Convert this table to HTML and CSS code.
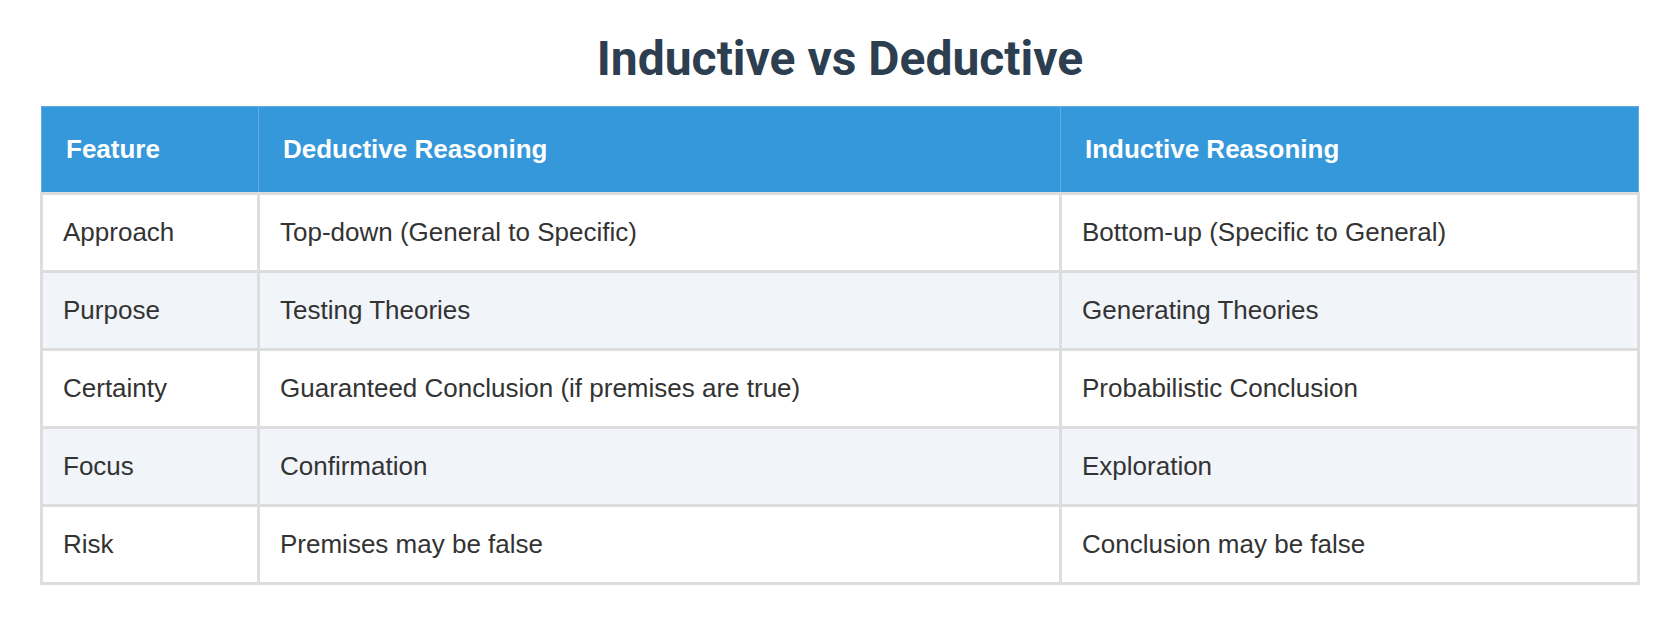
FILE: index.html
```html
<!DOCTYPE html>
<html lang="en">
<head>
<meta charset="utf-8">
<title>Inductive vs Deductive</title>
<link rel="stylesheet" href="styles.css">
</head>
<body>
<div class="page">
  <h1 class="title">Inductive vs Deductive</h1>
  <table class="compare">
    <colgroup>
      <col class="c1">
      <col class="c2">
      <col class="c3">
    </colgroup>
    <thead>
      <tr>
        <th>Feature</th>
        <th>Deductive Reasoning</th>
        <th>Inductive Reasoning</th>
      </tr>
    </thead>
    <tbody>
      <tr>
        <td>Approach</td>
        <td>Top-down (General to Specific)</td>
        <td>Bottom-up (Specific to General)</td>
      </tr>
      <tr>
        <td>Purpose</td>
        <td>Testing Theories</td>
        <td>Generating Theories</td>
      </tr>
      <tr>
        <td>Certainty</td>
        <td>Guaranteed Conclusion (if premises are true)</td>
        <td>Probabilistic Conclusion</td>
      </tr>
      <tr>
        <td>Focus</td>
        <td>Confirmation</td>
        <td>Exploration</td>
      </tr>
      <tr>
        <td>Risk</td>
        <td>Premises may be false</td>
        <td>Conclusion may be false</td>
      </tr>
    </tbody>
  </table>
</div>
</body>
</html>
```

FILE: styles.css
```css
html, body {
  margin: 0;
  padding: 0;
  background: #ffffff;
}

.page {
  padding: 31px 40px 0 40px;
  font-family: "Liberation Sans", Arial, sans-serif;
  color: #333333;
}

.title {
  margin: 0 0 19px 0;
  font-family: Roboto, "Liberation Sans", sans-serif;
  font-weight: 700;
  font-size: 48px;
  line-height: 56px;
  color: #2c3e50;
  text-align: center;
}

.compare {
  width: 100%;
  border-collapse: collapse;
  table-layout: fixed;
  font-size: 26px;
}

.c1 { width: 217px; }
.c2 { width: 802px; }
.c3 { width: 578px; }

.compare th {
  background: #3498db;
  color: #ffffff;
  font-weight: 700;
  text-align: left;
  padding: 27px 24px 28px 24px;
  line-height: 30px;
  border: 1px solid #5dade2;
}

.compare td {
  padding: 22px 20px 23px 20px;
  line-height: 30px;
  border: 3px solid #dddddd;
  background: #ffffff;
}

.compare tbody tr:nth-child(even) td {
  background: #f1f4f9;
}
```
